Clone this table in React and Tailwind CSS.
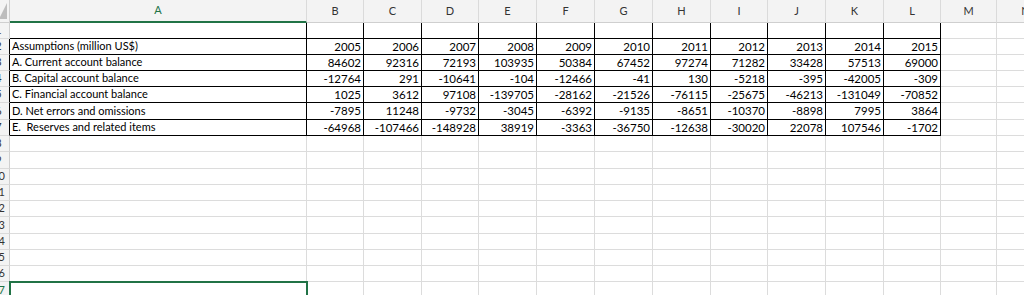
import React from "react";

const COLS = ["B", "C", "D", "E", "F", "G", "H", "I", "J", "K", "L", "M"];
const COL_W = [57, 58, 57, 58, 58, 58, 58, 57, 58, 58, 57, 56];
const ROW_H = [16, 16, 16, 16, 16, 17, 16, 16, 17, 16, 16, 16, 17, 16, 16, 16, 17];

const LABELS = [
  "",
  "Assumptions (million US$)",
  "A. Current account balance",
  "B. Capital account balance",
  "C. Financial account balance",
  "D. Net errors and omissions",
  "E.  Reserves and related items",
];

const DATA = [
  [],
  [2005, 2006, 2007, 2008, 2009, 2010, 2011, 2012, 2013, 2014, 2015],
  [84602, 92316, 72193, 103935, 50384, 67452, 97274, 71282, 33428, 57513, 69000],
  [-12764, 291, -10641, -104, -12466, -41, 130, -5218, -395, -42005, -309],
  [1025, 3612, 97108, -139705, -28162, -21526, -76115, -25675, -46213, -131049, -70852],
  [-7895, 11248, -9732, -3045, -6392, -9135, -8651, -10370, -8898, 7995, 3864],
  [-64968, -107466, -148928, 38919, -3363, -36750, -12638, -30020, 22078, 107546, -1702],
];

function RowHead({ n, h, dark }) {
  // row numbers are half cut off by the left edge of the window
  return (
    <div
      className={`w-[22px] -ml-[12px] shrink-0 bg-[#f3f3f3] border-b border-[#dadada] border-r flex items-center justify-center text-[11px] ${
        dark ? "border-r-black" : "border-r-[#cfcfcf]"
      } ${n === 17 ? "text-[#217346]" : "text-[#333]"}`}
      style={{ height: h }}
    >
      {n}
    </div>
  );
}

function Row({ r }) {
  const h = ROW_H[r];
  const n = r + 1;
  const inTable = n <= 7;
  const inBox = n >= 2 && n <= 7;
  return (
    <div className="flex">
      <RowHead n={n} h={h} dark={inBox} />
      <div
        className={`w-[297px] shrink-0 border-r border-b flex items-center pl-[2px] text-[11px] text-black whitespace-pre ${
          inTable ? "border-black" : "border-[#dcdcdc]"
        } ${n === 17 ? "outline-2 outline-[#217346] -outline-offset-1 z-10" : ""}`}
        style={{ height: h }}
      >
        {LABELS[r] || ""}
      </div>
      {COLS.map((c, i) => {
        const dark = inTable && i < 11;
        const v = DATA[r] ? DATA[r][i] : undefined;
        return (
          <div
            key={c}
            className={`shrink-0 border-r border-b flex items-center justify-end pr-[2px] text-[11.5px] text-black ${
              dark ? "border-black" : "border-[#dcdcdc]"
            } ${n === 1 && i < 11 ? "border-b-black" : ""}`}
            style={{ width: COL_W[i], height: h }}
          >
            {v !== undefined ? v : ""}
          </div>
        );
      })}
      <div className="flex-1 border-b border-[#dcdcdc]" style={{ height: h }} />
    </div>
  );
}

export default function App() {
  return (
    <div
      className="w-[1024px] h-[295px] overflow-hidden bg-white select-none"
      style={{ fontFamily: "Lato, 'Liberation Sans', sans-serif" }}
    >
      {/* column header */}
      <div className="flex h-[23px] bg-[#f3f3f3]">
        <div className="w-[22px] -ml-[12px] shrink-0 border-r border-b border-[#cfcfcf] relative">
          <svg className="absolute right-[2px] bottom-[3px]" width="8" height="16" viewBox="0 0 8 16">
            <polygon points="0,16 8,16 8,0" fill="#bdbdbd" />
          </svg>
        </div>
        <div className="w-[297px] shrink-0 border-r border-[#dadada] border-b-2 border-b-[#217346] flex items-center justify-center text-[11px] text-[#217346]">
          A
        </div>
        {COLS.map((c, i) => (
          <div
            key={c}
            className="shrink-0 border-r border-b border-[#dadada] border-b-[#cfcfcf] flex items-center justify-center text-[11px] text-[#333]"
            style={{ width: COL_W[i] }}
          >
            {c}
          </div>
        ))}
        <div className="w-[57px] shrink-0 border-b border-[#cfcfcf] flex items-center justify-center text-[11px] text-[#333]">
          N
        </div>
      </div>
      {ROW_H.map((_, r) => (
        <Row key={r} r={r} />
      ))}
    </div>
  );
}
